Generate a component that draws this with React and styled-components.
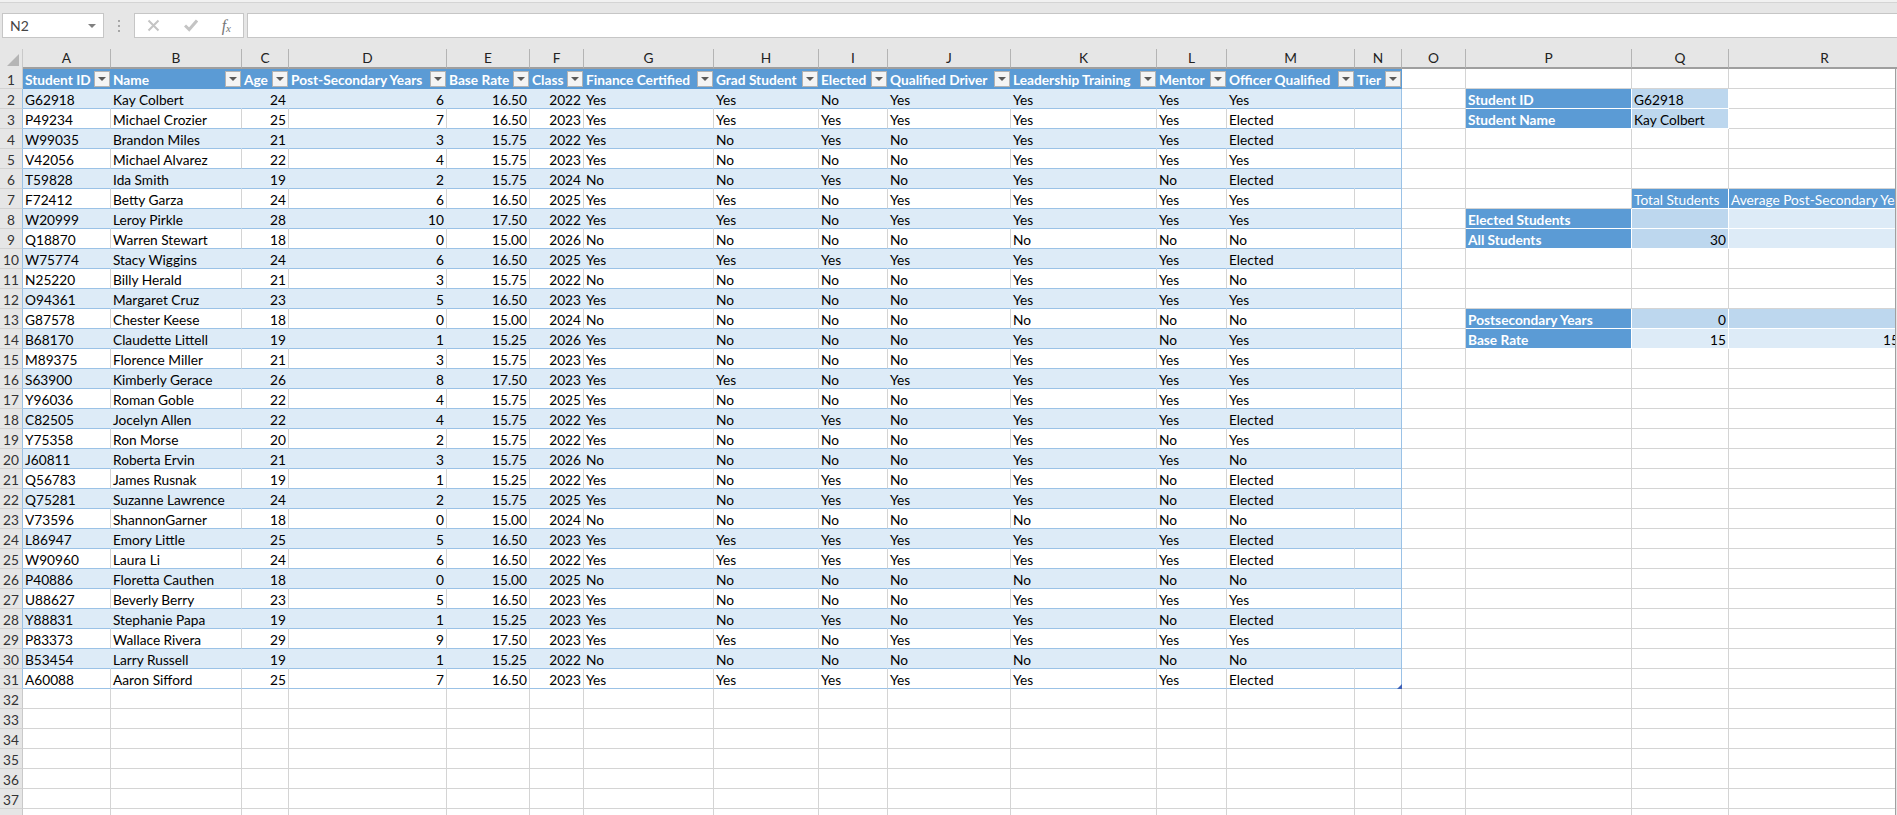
import React from 'react';
import styled, { createGlobalStyle } from 'styled-components';

const GlobalStyle = createGlobalStyle`
  html, body {
    margin: 0;
    padding: 0;
    overflow: hidden;
    background: #e6e6e6;
  }
`;

const FONT = `Lato, "Open Sans", sans-serif`;
const GRID = '23px 88px 131px 47px 158px 83px 54px 130px 105px 69px 123px 146px 70px 128px 47px 64px 166px 97px 192px';

const colors = {
    chrome: '#e6e6e6',
    chromeLine: '#c6c6c6',
    grid: '#d4d4d4',
    head: '#5b9bd5',
    band: '#ddebf7',
    mid: '#bdd7ee',
    tableLine: '#9bc2e6',
};

const Page = styled.div`
  width: 1897px;
  height: 815px;
  overflow: hidden;
  background: ${colors.chrome};
  font-family: ${FONT};
  color: #000;
`;
const TopStrip = styled.div`
  height: 2px;
  background: #f1f1f1;
  border-bottom: 1px solid #d4d4d4;
`;
const FormulaRow = styled.div`
  height: 25px;
  margin: 10px 0 11px;
  padding-left: 2px;
  display: flex;
  align-items: stretch;
`;
const NameBox = styled.div`
  width: 102px;
  box-sizing: border-box;
  padding: 0 7px;
  display: flex;
  align-items: center;
  justify-content: space-between;
  background: #fff;
  border: 1px solid ${colors.chromeLine};
  font-size: 14px;
  color: #444;
`;
const NameArrow = styled.span`
  width: 0;
  height: 0;
  border-left: 4px solid transparent;
  border-right: 4px solid transparent;
  border-top: 4px solid #808080;
`;
const Dots = styled.div`
  width: 30px;
  display: flex;
  flex-direction: column;
  align-items: center;
  justify-content: center;
  gap: 3px;
`;
const Dot = styled.span`
  width: 2px;
  height: 2px;
  background: #a6a6a6;
`;
const FormulaTools = styled.div`
  width: 110px;
  box-sizing: border-box;
  padding: 0 12px;
  display: flex;
  align-items: center;
  justify-content: space-between;
  background: #fff;
  border: 1px solid ${colors.chromeLine};
`;
const FxMark = styled.span`
  font-family: "Liberation Serif", serif;
  font-style: italic;
  font-size: 16px;
  color: #757575;
  line-height: 1;
  sub {
    font-size: 11px;
    vertical-align: -1px;
    line-height: 0;
  }
`;
const FormulaInput = styled.div`
  flex: 1;
  margin-left: 3px;
  background: #fff;
  border-top: 1px solid ${colors.chromeLine};
  border-bottom: 1px solid ${colors.chromeLine};
  border-left: 1px solid ${colors.chromeLine};
`;

const ColumnHeader = styled.div`
  display: grid;
  grid-template-columns: ${GRID};
  height: 20px;
  width: 1897px;
  overflow: hidden;
`;
const Corner = styled.div`
  position: relative;
  border-right: 1px solid #c9c9c9;
  &::after {
    content: "";
    position: absolute;
    right: 3px;
    bottom: 3px;
    width: 12px;
    height: 12px;
    background: #b5b5b5;
    clip-path: polygon(100% 0, 100% 100%, 0 100%);
  }
`;
const ColumnLabel = styled.div`
  box-sizing: border-box;
  border-right: 1px solid #b4b4b4;
  border-bottom: 2px solid #9f9f9f;
  text-align: center;
  font-size: 13.7px;
  line-height: 18px;
  color: #222;
`;

const Body = styled.div`
  width: 1896px;
  height: 746px;
  overflow: hidden;
  background: #fff;
  border-right: 1px solid #a0a0a0;
  box-sizing: border-box;
`;
const Row = styled.div`
  display: grid;
  grid-template-columns: ${GRID};
  height: 20px;
  width: 1920px;
  font-size: 13.7px;
  line-height: 21px;
`;
const RowHeader = styled.div`
  box-sizing: border-box;
  background: ${colors.chrome};
  border-right: 1px solid ${({$table}) => $table ? colors.tableLine : '#c9c9c9'};
  border-bottom: 1px solid #d2d2d2;
  text-align: center;
  color: #333;
  overflow: hidden;
`;
const Cell = styled.div`
  box-sizing: border-box;
  padding: 0 2px;
  white-space: nowrap;
  overflow: hidden;
  border-right: 1px solid ${colors.grid};
  border-bottom: 1px solid ${colors.grid};
`;
const TableHead = styled(Cell)`
  padding-right: 0;
  display: flex;
  align-items: center;
  justify-content: space-between;
  background: ${colors.head};
  border-color: ${colors.head};
  color: #fff;
  font-weight: 700;
`;
const HeadLabel = styled.span`
  margin-top: 2px;
  line-height: 17px;
`;
const FilterButton = styled.span`
  flex: none;
  width: 16px;
  height: 16px;
  box-sizing: border-box;
  display: flex;
  align-items: center;
  justify-content: center;
  background: #f4f4f4;
  border: 1px solid #b3b3b3;
  &::after {
    content: "";
    border-left: 4px solid transparent;
    border-right: 4px solid transparent;
    border-top: 4px solid #5a5a5a;
    margin-top: 1px;
  }
`;
const TableCell = styled(Cell)`
  position: relative;
  overflow: ${({$handle}) => $handle ? 'visible' : 'hidden'};
  text-align: ${({$right}) => $right ? 'right' : 'left'};
  background: ${({$band}) => $band ? colors.band : '#fff'};
  border-bottom-color: ${colors.tableLine};
  border-right-color: ${({$band, $last}) => $last ? colors.tableLine : $band ? colors.band : colors.grid};
`;
const ResizeHandle = styled.span`
  position: absolute;
  right: -1px;
  bottom: -1px;
  width: 5px;
  height: 5px;
  background: #3f62b8;
  clip-path: polygon(100% 0, 100% 100%, 0 100%);
`;
const PanelCell = styled(Cell)`
  text-align: ${({$right}) => $right ? 'right' : 'left'};
  font-weight: ${({$bold}) => $bold ? 700 : 400};
  color: ${({$fill}) => $fill === 'head' ? '#fff' : '#000'};
  background: ${({$fill}) => colors[$fill]};
  border-color: #fff;
`;

const CloseIcon = () => (
    <svg width="13" height="13" viewBox="0 0 13 13" fill="none" stroke="#c4c4c4" strokeWidth="2">
        <path d="M1.5 1.5 L11.5 11.5 M11.5 1.5 L1.5 11.5"/>
    </svg>
);
const CheckIcon = () => (
    <svg width="14" height="13" viewBox="0 0 14 13" fill="none" stroke="#c4c4c4" strokeWidth="3">
        <path d="M1 6.5 L5.2 10.5 L13 1.5"/>
    </svg>
);

const LETTERS = 'ABCDEFGHIJKLMNOPQR'.split('');
const HEADERS = [
    'Student ID', 'Name', 'Age', 'Post-Secondary Years', 'Base Rate', 'Class', 'Finance Certified',
    'Grad Student', 'Elected', 'Qualified Driver', 'Leadership Training', 'Mentor', 'Officer Qualified', 'Tier',
];

const STUDENTS = [
    'G62918|Kay Colbert|24|6|16.50|2022|Yes|Yes|No|Yes|Yes|Yes|Yes',
    'P49234|Michael Crozier|25|7|16.50|2023|Yes|Yes|Yes|Yes|Yes|Yes|Elected',
    'W99035|Brandon Miles|21|3|15.75|2022|Yes|No|Yes|No|Yes|Yes|Elected',
    'V42056|Michael Alvarez|22|4|15.75|2023|Yes|No|No|No|Yes|Yes|Yes',
    'T59828|Ida Smith|19|2|15.75|2024|No|No|Yes|No|Yes|No|Elected',
    'F72412|Betty Garza|24|6|16.50|2025|Yes|Yes|No|Yes|Yes|Yes|Yes',
    'W20999|Leroy Pirkle|28|10|17.50|2022|Yes|Yes|No|Yes|Yes|Yes|Yes',
    'Q18870|Warren Stewart|18|0|15.00|2026|No|No|No|No|No|No|No',
    'W75774|Stacy Wiggins|24|6|16.50|2025|Yes|Yes|Yes|Yes|Yes|Yes|Elected',
    'N25220|Billy Herald|21|3|15.75|2022|No|No|No|No|Yes|Yes|No',
    'O94361|Margaret Cruz|23|5|16.50|2023|Yes|No|No|No|Yes|Yes|Yes',
    'G87578|Chester Keese|18|0|15.00|2024|No|No|No|No|No|No|No',
    'B68170|Claudette Littell|19|1|15.25|2026|Yes|No|No|No|Yes|No|Yes',
    'M89375|Florence Miller|21|3|15.75|2023|Yes|No|No|No|Yes|Yes|Yes',
    'S63900|Kimberly Gerace|26|8|17.50|2023|Yes|Yes|No|Yes|Yes|Yes|Yes',
    'Y96036|Roman Goble|22|4|15.75|2025|Yes|No|No|No|Yes|Yes|Yes',
    'C82505|Jocelyn Allen|22|4|15.75|2022|Yes|No|Yes|No|Yes|Yes|Elected',
    'Y75358|Ron Morse|20|2|15.75|2022|Yes|No|No|No|Yes|No|Yes',
    'J60811|Roberta Ervin|21|3|15.75|2026|No|No|No|No|Yes|Yes|No',
    'Q56783|James Rusnak|19|1|15.25|2022|Yes|No|Yes|No|Yes|No|Elected',
    'Q75281|Suzanne Lawrence|24|2|15.75|2025|Yes|No|Yes|Yes|Yes|No|Elected',
    'V73596|ShannonGarner|18|0|15.00|2024|No|No|No|No|No|No|No',
    'L86947|Emory Little|25|5|16.50|2023|Yes|Yes|Yes|Yes|Yes|Yes|Elected',
    'W90960|Laura Li|24|6|16.50|2022|Yes|Yes|Yes|Yes|Yes|Yes|Elected',
    'P40886|Floretta Cauthen|18|0|15.00|2025|No|No|No|No|No|No|No',
    'U88627|Beverly Berry|23|5|16.50|2023|Yes|No|No|No|Yes|Yes|Yes',
    'Y88831|Stephanie Papa|19|1|15.25|2023|Yes|No|Yes|No|Yes|No|Elected',
    'P83373|Wallace Rivera|29|9|17.50|2023|Yes|Yes|No|Yes|Yes|Yes|Yes',
    'B53454|Larry Russell|19|1|15.25|2022|No|No|No|No|No|No|No',
    'A60088|Aaron Sifford|25|7|16.50|2023|Yes|Yes|Yes|Yes|Yes|Yes|Elected',
].map((line) => line.split('|'));

// right hand summary block, keyed by sheet row: [P, Q, R]
const PANEL = {
    2: [{text: 'Student ID', fill: 'head', bold: true}, {text: 'G62918', fill: 'mid'}, null],
    3: [{text: 'Student Name', fill: 'head', bold: true}, {text: 'Kay Colbert', fill: 'mid'}, null],
    7: [null, {text: 'Total Students', fill: 'head'}, {text: 'Average Post-Secondary Years', fill: 'head'}],
    8: [{text: 'Elected Students', fill: 'head', bold: true}, {text: '', fill: 'mid'}, {text: '', fill: 'band'}],
    9: [{text: 'All Students', fill: 'head', bold: true}, {text: '30', fill: 'mid', right: true}, {text: '', fill: 'band'}],
    13: [{text: 'Postsecondary Years', fill: 'head', bold: true}, {text: '0', fill: 'mid', right: true}, {text: '', fill: 'mid'}],
    14: [{text: 'Base Rate', fill: 'head', bold: true}, {text: '15', fill: 'band', right: true}, {text: '15.00', fill: 'band', right: true}],
};

const isRight = (index) => index >= 2 && index <= 5;

const renderTableCells = (rowNumber) => {
    if (rowNumber === 1) {
        return HEADERS.map((title) => (
            <TableHead key={title}>
                <HeadLabel>{title}</HeadLabel>
                <FilterButton/>
            </TableHead>
        ));
    }
    const student = STUDENTS[rowNumber - 2];
    if (!student) {
        return HEADERS.map((title) => <Cell key={title}/>);
    }
    const band = rowNumber % 2 === 0;
    return HEADERS.map((title, index) => (
        <TableCell
            key={title}
            $band={band}
            $right={isRight(index)}
            $last={index === HEADERS.length - 1}
            $handle={rowNumber === 31 && index === HEADERS.length - 1}
        >
            {student[index]}
            {rowNumber === 31 && index === HEADERS.length - 1 && <ResizeHandle/>}
        </TableCell>
    ));
};

const renderPanelCells = (rowNumber) => {
    const panel = PANEL[rowNumber] || [null, null, null];
    return panel.map((item, index) => (
        item
            ? <PanelCell key={index} $fill={item.fill} $bold={item.bold} $right={item.right}>{item.text}</PanelCell>
            : <Cell key={index}/>
    ));
};

const ROWS = Array.from({length: 38}, (_, index) => index + 1);

const App = () => {
    return (
        <Page>
            <GlobalStyle/>
            <TopStrip/>
            <FormulaRow>
                <NameBox>
                    N2
                    <NameArrow/>
                </NameBox>
                <Dots>
                    <Dot/>
                    <Dot/>
                    <Dot/>
                </Dots>
                <FormulaTools>
                    <CloseIcon/>
                    <CheckIcon/>
                    <FxMark>f<sub>x</sub></FxMark>
                </FormulaTools>
                <FormulaInput/>
            </FormulaRow>
            <ColumnHeader>
                <Corner/>
                {LETTERS.map((letter) => <ColumnLabel key={letter}>{letter}</ColumnLabel>)}
            </ColumnHeader>
            <Body>
                {ROWS.map((rowNumber) => (
                    <Row key={rowNumber}>
                        <RowHeader $table={rowNumber >= 2 && rowNumber <= 31}>
                            {rowNumber === 38 ? '' : rowNumber}
                        </RowHeader>
                        {renderTableCells(rowNumber)}
                        <Cell/>
                        {renderPanelCells(rowNumber)}
                    </Row>
                ))}
            </Body>
        </Page>
    );
};

export default App;
